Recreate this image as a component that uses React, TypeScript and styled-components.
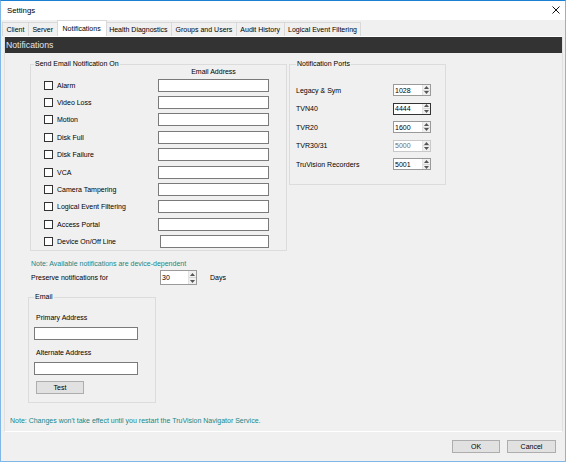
import { FC } from 'react';
import styled, { createGlobalStyle } from 'styled-components';

const GlobalStyle = createGlobalStyle`
  html, body {
    margin: 0;
    padding: 0;
    background: #f0f0f0;
  }
  body {
    font-family: "Liberation Sans", Arial, sans-serif;
    font-size: 7px;
    color: #000;
  }
  * {
    box-sizing: border-box;
  }
`;

const tabs = [
  'Client',
  'Server',
  'Notifications',
  'Health Diagnostics',
  'Groups and Users',
  'Audit History',
  'Logical Event Filtering',
];

const events = [
  'Alarm',
  'Video Loss',
  'Motion',
  'Disk Full',
  'Disk Failure',
  'VCA',
  'Camera Tampering',
  'Logical Event Filtering',
  'Access Portal',
  'Device On/Off Line',
];

const ports = [
  { label: 'Legacy & Sym', value: '1028' },
  { label: 'TVN40', value: '4444', focused: true },
  { label: 'TVR20', value: '1600' },
  { label: 'TVR30/31', value: '5000', disabled: true },
  { label: 'TruVision Recorders', value: '5001' },
];

const Spin: FC<{ value: string; width: number; height: number; focused?: boolean; disabled?: boolean }> = ({
  value,
  width,
  height,
  focused,
  disabled,
}) => (
  <S.spin w={width} h={height} focused={focused} disabled={disabled}>
    <S.spinValue>{value}</S.spinValue>
    <S.spinButtons>
      <S.arrow>
        <svg width="5" height="3" viewBox="0 0 5 3">
          <path d="M2.5 0 L5 3 L0 3 Z" fill="#555" />
        </svg>
      </S.arrow>
      <S.arrow>
        <svg width="5" height="3" viewBox="0 0 5 3">
          <path d="M0 0 L5 0 L2.5 3 Z" fill="#555" />
        </svg>
      </S.arrow>
    </S.spinButtons>
  </S.spin>
);

const App: FC = () => {
  return (
    <>
      <GlobalStyle />
      <S.window>
        <S.titleBar>
          <S.title>Settings</S.title>
          <svg width="8" height="8" viewBox="0 0 8 8">
            <path d="M0.5 0.5 L7.5 7.5 M7.5 0.5 L0.5 7.5" stroke="#111" strokeWidth="1" />
          </svg>
        </S.titleBar>

        <S.tabStrip>
          {tabs.map((t) => (
            <S.tab key={t} active={t === 'Notifications'}>
              {t}
            </S.tab>
          ))}
        </S.tabStrip>

        <S.page>
          <S.header>Notifications</S.header>
          <S.content>
            <S.topRow>
              <S.group w={257}>
                <S.legend>Send Email Notification On</S.legend>
                <S.eventGrid>
                  <span />
                  <S.columnTitle>Email Address</S.columnTitle>
                  {events.map((e, i) => (
                    <S.eventRow key={e}>
                      <S.check>
                        <S.box />
                        {e}
                      </S.check>
                      <S.textBox w={i === events.length - 1 ? 109 : 111} shift={i === events.length - 1 ? 2 : 0} />
                    </S.eventRow>
                  ))}
                </S.eventGrid>
              </S.group>

              <S.group w={157}>
                <S.legend indent={6}>Notification Ports</S.legend>
                <S.portList>
                  {ports.map((p) => (
                    <S.portRow key={p.label}>
                      <span>{p.label}</span>
                      <Spin value={p.value} width={38} height={12} focused={p.focused} disabled={p.disabled} />
                    </S.portRow>
                  ))}
                </S.portList>
              </S.group>
            </S.topRow>

            <S.note>Note: Available notifications are device-dependent</S.note>
            <S.preserve>
              <S.preserveLabel>Preserve notifications for</S.preserveLabel>
              <Spin value="30" width={37} height={15} />
              <S.days>Days</S.days>
            </S.preserve>

            <S.group w={128} top={8}>
              <S.legend indent={5}>Email</S.legend>
              <S.emailBody>
                <S.fieldLabel>Primary Address</S.fieldLabel>
                <S.textBox w={104} />
                <S.fieldLabel gap={9}>Alternate Address</S.fieldLabel>
                <S.textBox w={104} />
                <S.button w={48} top={6} left={2}>
                  Test
                </S.button>
              </S.emailBody>
            </S.group>

            <S.footNote>Note: Changes won't take effect until you restart the TruVision Navigator Service.</S.footNote>
          </S.content>
        </S.page>

        <S.footer>
          <S.button w={48}>OK</S.button>
          <S.button w={49}>Cancel</S.button>
        </S.footer>
      </S.window>
    </>
  );
};

const S = {
  window: styled.div`
    width: 566px;
    height: 462px;
    display: flex;
    flex-direction: column;
    background: #f0f0f0;
    border: 1px solid #7fb8e6;
    border-top-color: #1b7fd4;
  `,

  titleBar: styled.div`
    height: 19px;
    flex-shrink: 0;
    background: #fff;
    display: flex;
    align-items: center;
    justify-content: space-between;
    padding: 0 5px 1px 6px;
  `,

  title: styled.div`
    font-size: 7.8px;
  `,

  tabStrip: styled.div`
    height: 16px;
    flex-shrink: 0;
    display: flex;
    align-items: flex-end;
    padding-left: 1px;
  `,

  tab: styled.div<{ active?: boolean }>`
    height: ${(p) => (p.active ? 16 : 14)}px;
    display: flex;
    align-items: center;
    padding: 0 ${(p) => (p.active ? 5 : 3.5)}px;
    margin: 0 ${(p) => (p.active ? -1 : 0)}px 0 -1px;
    position: relative;
    z-index: ${(p) => (p.active ? 1 : 0)};
    background: ${(p) => (p.active ? '#fff' : '#f0f0f0')};
    border: 1px solid #d9d9d9;
    border-bottom: none;
    white-space: nowrap;
    &:first-child {
      margin-left: 0;
    }
  `,

  page: styled.div`
    height: 396px;
    margin: 0 2px 0 3px;
    display: flex;
    flex-direction: column;
    border: 1px solid #e0e0e0;
    border-top-color: #fff;
    border-bottom-color: #fff;
  `,

  header: styled.div`
    height: 16px;
    flex-shrink: 0;
    background: #333;
    color: #e6e6e6;
    font-size: 8.7px;
    display: flex;
    align-items: center;
    padding-left: 1px;
  `,

  content: styled.div`
    flex: 1;
    display: flex;
    flex-direction: column;
    align-items: flex-start;
    padding: 7px 0 6px 23px;
  `,

  topRow: styled.div`
    display: flex;
    align-items: flex-start;
    gap: 2px;
    margin-left: 2px;
  `,

  group: styled.fieldset<{ w: number; top?: number }>`
    width: ${(p) => p.w}px;
    margin: ${(p) => p.top ?? 0}px 0 0;
    padding: 0;
    border: 1px solid #dcdcdc;
    min-width: 0;
  `,

  legend: styled.legend<{ indent?: number }>`
    margin-left: ${(p) => p.indent ?? 3}px;
    padding: 0 1px;
    line-height: 8px;
    font-size: 7px;
  `,

  eventGrid: styled.div`
    display: grid;
    grid-template-columns: 114px 111px;
    row-gap: 4.4px;
    padding: 0 0 2px 13px;
  `,

  columnTitle: styled.div`
    text-align: center;
    line-height: 8px;
    margin-bottom: -1.8px;
  `,

  eventRow: styled.div`
    display: contents;
  `,

  check: styled.label`
    display: flex;
    align-items: center;
    gap: 4px;
    height: 13px;
  `,

  box: styled.span`
    width: 9px;
    height: 9px;
    background: #fff;
    border: 1px solid #333;
    flex-shrink: 0;
  `,

  textBox: styled.div<{ w: number; shift?: number }>`
    width: ${(p) => p.w}px;
    height: 13px;
    margin-left: ${(p) => p.shift ?? 0}px;
    background: #fff;
    border: 1px solid #7a7a7a;
  `,

  portList: styled.div`
    display: flex;
    flex-direction: column;
    gap: 6.6px;
    padding: 16px 0 14px 6px;
  `,

  portRow: styled.div`
    display: grid;
    grid-template-columns: 97px 38px;
    align-items: center;
  `,

  spin: styled.div<{ w: number; h: number; focused?: boolean; disabled?: boolean }>`
    width: ${(p) => p.w}px;
    height: ${(p) => p.h}px;
    display: flex;
    background: #fff;
    border: 1px solid ${(p) => (p.focused ? '#333' : p.disabled ? '#c8c8c8' : '#9a9a9a')};
    color: ${(p) => (p.disabled ? '#6d6d6d' : '#000')};
  `,

  spinValue: styled.div`
    flex: 1;
    display: flex;
    align-items: center;
    padding-left: 1px;
  `,

  spinButtons: styled.div`
    width: 8px;
    display: flex;
    flex-direction: column;
    border-left: 1px solid #e3e3e3;
    background: #f0f0f0;
  `,

  arrow: styled.div`
    flex: 1;
    display: flex;
    align-items: center;
    justify-content: center;
    &:first-child {
      border-bottom: 1px solid #d6d6d6;
    }
  `,

  note: styled.div`
    color: #178787;
    line-height: 8px;
    margin: 9px 0 0 3px;
  `,

  preserve: styled.div`
    display: flex;
    align-items: center;
    margin: 2px 0 0 3px;
  `,

  preserveLabel: styled.div`
    width: 129px;
  `,

  days: styled.div`
    margin-left: 13px;
  `,

  emailBody: styled.div`
    display: flex;
    flex-direction: column;
    align-items: flex-start;
    padding: 13px 0 8px 5px;
  `,

  fieldLabel: styled.div<{ gap?: number }>`
    line-height: 8px;
    margin: ${(p) => p.gap ?? 0}px 0 5px 2px;
  `,

  button: styled.div<{ w: number; top?: number; left?: number }>`
    width: ${(p) => p.w}px;
    height: 13px;
    display: flex;
    align-items: center;
    justify-content: center;
    background: #e1e1e1;
    border: 1px solid #adadad;
    margin: ${(p) => p.top ?? 0}px 0 0 ${(p) => p.left ?? 0}px;
  `,

  footNote: styled.div`
    margin: auto 0 0 -18px;
    color: #178787;
    line-height: 8px;
  `,

  footer: styled.div`
    flex: 1;
    display: flex;
    justify-content: flex-end;
    align-items: flex-start;
    gap: 7px;
    padding: 8px 9px 0 0;
  `,
};

export default App;
